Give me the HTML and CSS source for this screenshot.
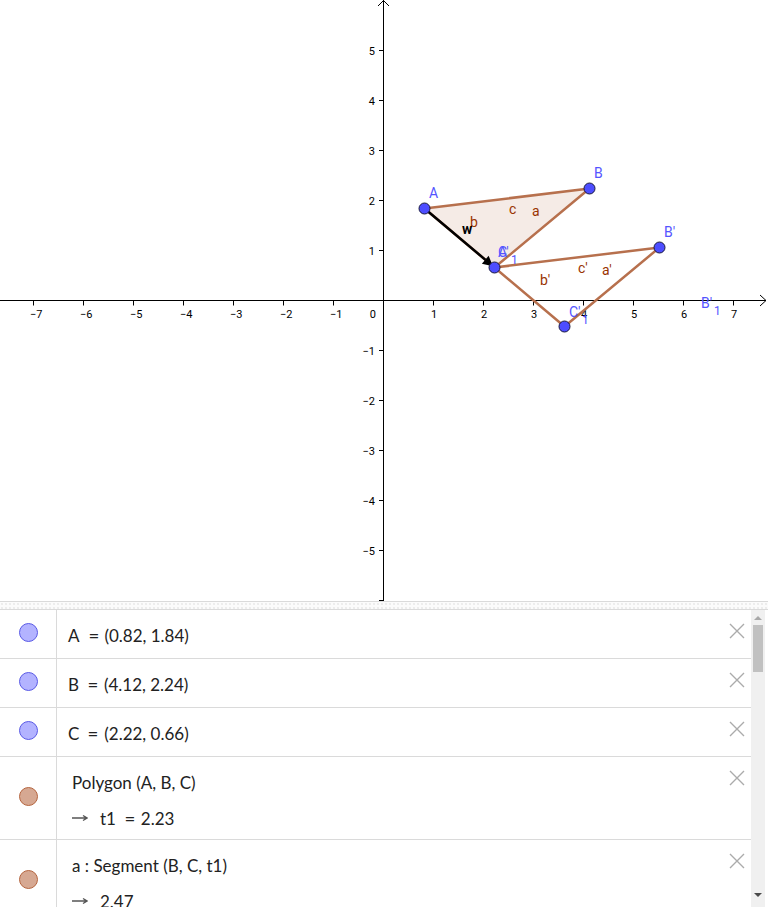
FILE: index.html
```html
<!DOCTYPE html>
<html>
<head>
<meta charset="utf-8">
<title>Graphics</title>
<link rel="stylesheet" href="styles.css">
</head>
<body>
<div class="app">
  <svg class="graph" width="768" height="601" viewBox="0 0 768 601" xmlns="http://www.w3.org/2000/svg">
    <g class="axes">
      <line x1="0" y1="300.5" x2="766" y2="300.5"/>
      <line x1="383.5" y1="0" x2="383.5" y2="601"/>
      <polyline points="760,295 766,300.5 760,306"/>
      <polyline points="378,6 383.5,0.5 389,6"/>
      <path d="M33.5 300.5v5M83.5 300.5v5M133.5 300.5v5M183.5 300.5v5M233.5 300.5v5M283.5 300.5v5M333.5 300.5v5M433.5 300.5v5M483.5 300.5v5M533.5 300.5v5M583.5 300.5v5M633.5 300.5v5M683.5 300.5v5M733.5 300.5v5"/>
      <path d="M379 50.5h4.5M379 100.5h4.5M379 150.5h4.5M379 200.5h4.5M379 250.5h4.5M379 350.5h4.5M379 400.5h4.5M379 450.5h4.5M379 500.5h4.5M379 550.5h4.5M379 600.5h4.5"/>
    </g>
    <g class="tick-labels">
      <text x="30" y="318">−7</text>
      <text x="80" y="318">−6</text>
      <text x="130" y="318">−5</text>
      <text x="180" y="318">−4</text>
      <text x="230" y="318">−3</text>
      <text x="280" y="318">−2</text>
      <text x="330" y="318">−1</text>
      <text x="376" y="318" class="end">0</text>
      <text x="434" y="318" class="mid">1</text>
      <text x="484" y="318" class="mid">2</text>
      <text x="534" y="318" class="mid">3</text>
      <text x="584" y="318" class="mid">4</text>
      <text x="634" y="318" class="mid">5</text>
      <text x="684" y="318" class="mid">6</text>
      <text x="734" y="318" class="mid">7</text>
      <text x="375" y="55" class="end">5</text>
      <text x="375" y="105" class="end">4</text>
      <text x="375" y="155" class="end">3</text>
      <text x="375" y="205" class="end">2</text>
      <text x="375" y="255" class="end">1</text>
      <text x="375" y="355" class="end">−1</text>
      <text x="375" y="405" class="end">−2</text>
      <text x="375" y="455" class="end">−3</text>
      <text x="375" y="505" class="end">−4</text>
      <text x="375" y="555" class="end">−5</text>
    </g>
    <polygon class="poly-fill" points="424.5,208.5 589.5,188.5 494.5,267.5"/>
    <g class="segs">
      <line x1="424.5" y1="208.5" x2="589.5" y2="188.5"/>
      <line x1="589.5" y1="188.5" x2="494.5" y2="267.5"/>
      <line x1="494.5" y1="267.5" x2="424.5" y2="208.5"/>
      <line x1="494.5" y1="267.5" x2="659.5" y2="247.5"/>
      <line x1="659.5" y1="247.5" x2="564.5" y2="326.5"/>
      <line x1="564.5" y1="326.5" x2="494.5" y2="267.5"/>
    </g>
    <line class="vec" x1="424.5" y1="208.5" x2="485.5" y2="259.9"/>
    <polygon class="vec-head" points="493,266.2 481.9,263.8 488.6,255.8"/>
    <g class="pts">
      <circle cx="424.5" cy="208.5" r="5.5"/>
      <circle cx="589.5" cy="188.5" r="5.5"/>
      <circle cx="494.5" cy="267.5" r="5.5"/>
      <circle cx="659.5" cy="247.5" r="5.5"/>
      <circle cx="564.5" cy="326.5" r="5.5"/>
    </g>
    <g class="pt-labels">
      <text x="429" y="198">A</text>
      <text x="594" y="178">B</text>
      <text x="664" y="237">B′</text>
      <text x="498" y="257">C</text>
      <text x="498" y="257">A′</text>
      <text x="511" y="264" class="sub">1</text>
      <text x="569" y="317">C′</text>
      <text x="582" y="324" class="sub">1</text>
      <text x="701" y="308">B′</text>
      <text x="714" y="315" class="sub">1</text>
    </g>
    <g class="seg-labels">
      <text x="509" y="214">c</text>
      <text x="532" y="216">a</text>
      <text x="470" y="227">b</text>
      <text x="540" y="285">b′</text>
      <text x="578" y="273">c′</text>
      <text x="602" y="275">a′</text>
    </g>
    <text class="vec-label" x="462" y="234">w</text>
  </svg>

  <div class="divider"></div>

  <div class="algebra">
    <div class="list">
      <div class="row">
        <div class="marker"><span class="dot blue"></span></div>
        <div class="content"><div class="line">A<span class="eq">=</span>(0.82, 1.84)</div></div>
        <div class="close"><svg viewBox="0 0 16 16" width="16" height="16"><path d="M1 1L15 15M15 1L1 15"/></svg></div>
      </div>
      <div class="row">
        <div class="marker"><span class="dot blue"></span></div>
        <div class="content"><div class="line">B<span class="eq">=</span>(4.12, 2.24)</div></div>
        <div class="close"><svg viewBox="0 0 16 16" width="16" height="16"><path d="M1 1L15 15M15 1L1 15"/></svg></div>
      </div>
      <div class="row">
        <div class="marker"><span class="dot blue"></span></div>
        <div class="content"><div class="line">C<span class="eq">=</span>(2.22, 0.66)</div></div>
        <div class="close"><svg viewBox="0 0 16 16" width="16" height="16"><path d="M1 1L15 15M15 1L1 15"/></svg></div>
      </div>
      <div class="row tall">
        <div class="marker"><span class="dot brown"></span></div>
        <div class="content def">
          <div class="line">Polygon (A, B, C)</div>
          <div class="line out"><svg class="arrow" viewBox="0 0 16 8" width="16" height="8"><path d="M0 4H14M11 1.5L15 4L11 6.5"/></svg><span>t1<span class="eq">=</span>2.23</span></div>
        </div>
        <div class="close"><svg viewBox="0 0 16 16" width="16" height="16"><path d="M1 1L15 15M15 1L1 15"/></svg></div>
      </div>
      <div class="row tall">
        <div class="marker"><span class="dot brown"></span></div>
        <div class="content def">
          <div class="line">a : Segment (B, C, t1)</div>
          <div class="line out"><svg class="arrow" viewBox="0 0 16 8" width="16" height="8"><path d="M0 4H14M11 1.5L15 4L11 6.5"/></svg><span>2.47</span></div>
        </div>
        <div class="close"><svg viewBox="0 0 16 16" width="16" height="16"><path d="M1 1L15 15M15 1L1 15"/></svg></div>
      </div>
    </div>
    <div class="scroll">
      <div class="arr up"></div>
      <div class="thumb"></div>
      <div class="arr down"></div>
    </div>
  </div>
</div>
</body>
</html>
```
FILE: styles.css
```css
* { box-sizing: border-box; }
html, body { margin: 0; padding: 0; background: #fff; }
body { font-family: Lato, "Open Sans", sans-serif; }

.app {
  width: 768px;
  height: 907px;
  overflow: hidden;
  display: flex;
  flex-direction: column;
}

/* graphics view */
.graph { display: block; flex: none; }
.axes line, .axes polyline, .axes path { stroke: #000; stroke-width: 1; fill: none; }
.tick-labels text { font-family: Roboto, "Liberation Sans", sans-serif; font-size: 11px; fill: #000; }
.tick-labels .mid { text-anchor: middle; }
.tick-labels .end { text-anchor: end; }
.poly-fill { fill: #f5ebe6; stroke: none; }
.segs line { stroke: #b7704d; stroke-width: 2.5; stroke-linecap: round; }
.vec { stroke: #000; stroke-width: 2.5; }
.vec-head { fill: #000; }
.pts circle { fill: #4d4dff; stroke: #1c1c3c; stroke-width: 1; }
.pt-labels text { font-family: Roboto, "Liberation Sans", sans-serif; font-size: 14px; fill: #5454ff; }
.pt-labels .sub { font-size: 12px; }
.seg-labels text { font-family: Roboto, "Liberation Sans", sans-serif; font-size: 14px; fill: #993300; }
.vec-label { font-family: Roboto, "Liberation Sans", sans-serif; font-size: 14px; font-weight: bold; fill: #000; }

/* splitter */
.divider {
  flex: none;
  height: 9px;
  border-top: 1px solid #dadada;
  border-bottom: 1px solid #dadada;
  background-color: #fbfbfb;
  background-image: radial-gradient(#ececec 0.7px, transparent 0.9px);
  background-size: 4px 4px;
}

/* algebra view */
.algebra { flex: 1; display: flex; min-height: 0; }
.list { width: 751px; flex: none; }
.row { display: flex; height: 49px; border-bottom: 1px solid #dadada; }
.row.tall { height: 83px; }
.marker {
  width: 57px;
  flex: none;
  border-right: 1px solid #dadada;
  display: flex;
  align-items: center;
  justify-content: center;
}
.dot { width: 19px; height: 19px; border-radius: 50%; margin-top: -3px; }
.dot.blue { background: #b3b3ff; border: 1px solid #5a5ae6; }
.dot.brown { background: #d6a892; border: 1px solid #b5653f; }

.content {
  flex: 1;
  padding: 14px 0 0 11px;
  font-size: 17px;
  line-height: 24px;
  color: #222;
  white-space: nowrap;
}
.content.def { padding-left: 15px; }
.eq { display: inline-block; margin: 0 6px 0 9px; transform: scaleX(1.1); }
.line.out { margin-top: 12px; display: flex; align-items: center; }
.arrow { flex: none; margin-right: 12px; margin-top: -2px; }
.arrow path { stroke: #555; stroke-width: 1.3; fill: none; }

.close { flex: none; width: 16px; height: 16px; margin: 13px 6px 0 0; }
.close path { stroke: #ababab; stroke-width: 1.4; fill: none; }

.scroll {
  flex: none;
  width: 14px;
  margin-right: 3px;
  background: #f0f0f0;
  display: flex;
  flex-direction: column;
  align-items: center;
}
.arr { width: 0; height: 0; border-left: 4px solid transparent; border-right: 4px solid transparent; }
.arr.up { border-bottom: 4px solid #a8a8a8; margin-top: 6px; margin-bottom: 5px; }
.thumb { width: 10px; height: 47px; background: #c1c1c1; }
.arr.down { border-top: 4px solid #4a4a4a; margin-top: auto; margin-bottom: 10px; }
```
